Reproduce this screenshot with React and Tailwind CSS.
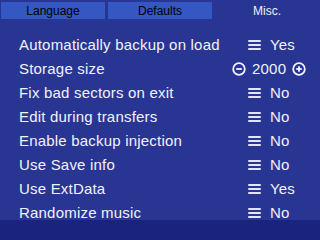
import React from "react";

const rows = [
  { label: "Automatically backup on load", value: "Yes" },
  { label: "Storage size", value: "2000", stepper: true },
  { label: "Fix bad sectors on exit", value: "No" },
  { label: "Edit during transfers", value: "No" },
  { label: "Enable backup injection", value: "No" },
  { label: "Use Save info", value: "No" },
  { label: "Use ExtData", value: "Yes" },
  { label: "Randomize music", value: "No" },
];

function Menu() {
  return (
    <div className="flex flex-col w-[13px] h-[10px] justify-between">
      <div className="h-[2px] bg-[#dfe6f5] rounded-[1px]" />
      <div className="h-[2px] bg-[#dfe6f5] rounded-[1px]" />
      <div className="h-[2px] bg-[#dfe6f5] rounded-[1px]" />
    </div>
  );
}

function Circle({ plus }) {
  return (
    <svg width="14" height="14" viewBox="0 0 14 14">
      <circle cx="7" cy="7" r="5.8" fill="none" stroke="#f4f4f8" strokeWidth="1.8" />
      <line x1="4.2" y1="7" x2="9.8" y2="7" stroke="#f4f4f8" strokeWidth="1.8" />
      {plus && <line x1="7" y1="4.2" x2="7" y2="9.8" stroke="#f4f4f8" strokeWidth="1.8" />}
    </svg>
  );
}

export default function App() {
  return (
    <div
      className="w-[320px] h-[240px] bg-[#283593] flex flex-col overflow-hidden"
      style={{ fontFamily: '"Liberation Sans", Arial, sans-serif' }}
    >
      <div className="h-[220px] shrink-0 flex flex-col overflow-hidden">
        <div className="flex shrink-0 gap-[3px] px-[1px] pt-[2px] h-[19px]">
          <div className="w-[104px] bg-[#3457c1] flex items-center justify-center text-[12px] text-black leading-none">
            Language
          </div>
          <div className="w-[104px] bg-[#3457c1] flex items-center justify-center text-[12px] text-black leading-none">
            Defaults
          </div>
          <div className="w-[104px] flex items-center justify-center text-[12px] text-[#f0f0f5] leading-none">
            Misc.
          </div>
        </div>
        <div className="flex flex-col shrink-0 pt-[14px]">
          {rows.map((r) => (
            <div key={r.label} className="flex items-center h-[24px] shrink-0 text-[15px] tracking-[0.2px] text-[#f2f2f6]">
              <div className="pl-[19px] flex-1">{r.label}</div>
              <div className="w-[88px] flex items-center">
                {r.stepper ? (
                  <>
                    <Circle />
                    <span className="ml-[6px]">{r.value}</span>
                    <span className="ml-[6px]"><Circle plus /></span>
                  </>
                ) : (
                  <>
                    <div className="ml-[16px]"><Menu /></div>
                    <span className="ml-[9px]">{r.value}</span>
                  </>
                )}
              </div>
            </div>
          ))}
        </div>
      </div>
      <div className="flex-1 bg-[#1a237e]" />
    </div>
  );
}
